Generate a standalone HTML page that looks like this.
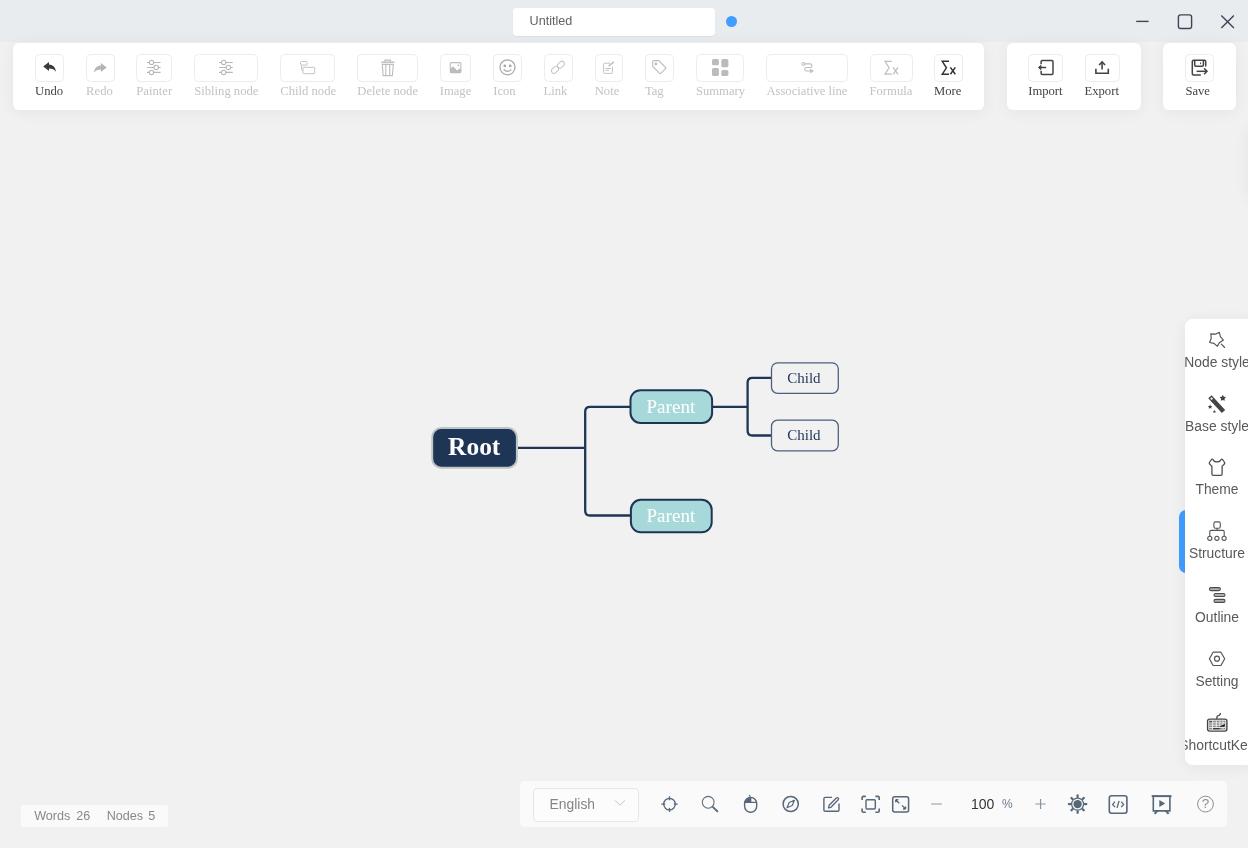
<!DOCTYPE html>
<html><head><meta charset="utf-8">
<style>
*{box-sizing:border-box;margin:0;padding:0}
html,body{width:1248px;height:848px;overflow:hidden;background:#f1f1f1;font-family:"Liberation Sans",sans-serif;position:relative}
.abs{position:absolute}
#root{position:absolute;left:0;top:0;width:1248px;height:848px;will-change:transform}
#titlebar{left:0;top:0;width:1248px;height:42.2px;background:#e9ecef}
#title{left:513px;top:8px;width:202px;height:28px;background:#fff;border-radius:4px;box-shadow:0 1px 1px rgba(0,0,0,.05);font-size:12.6px;color:#606266;line-height:27.4px;padding-left:16.6px}
#dot{left:725.8px;top:15.8px;width:10.8px;height:10.8px;border-radius:50%;background:#409eff}
.tb{background:#fff;border-radius:6px;box-shadow:0 2px 16px 0 rgba(0,0,0,.06);top:43.4px;height:66.2px}
.btn{position:absolute;top:54.2px;height:27.4px;border:1px solid #ececec;border-radius:4.5px;background:#fff}
.lbl{position:absolute;top:83.3px;font-family:"Liberation Serif",serif;font-size:12.65px;color:#c3c3c3;white-space:nowrap;line-height:17px}
.lbl.en{color:#444}
#words{left:21.2px;top:804.7px;width:147px;height:22.5px;background:#fafafa;border-radius:2px}
.wt{position:absolute;top:808.9px;font-size:12.6px;color:#888;line-height:15px;white-space:nowrap}
#nav{left:520px;top:781px;width:707px;height:46px;background:#fafafa;border-radius:5px}
#lang{left:533.1px;top:788.1px;width:105.6px;height:33.6px;border:1px solid #e4e6ec;border-radius:4px;background:#fcfcfc}
#langt{left:549.6px;top:797px;font-size:13.85px;color:#858585;line-height:15px}
#side{left:1185px;top:318.7px;width:70px;height:446.1px;background:#fff;border-radius:7.5px 0 0 7.5px;box-shadow:0 2px 16px 0 rgba(0,0,0,.06);overflow:hidden}
#tab{left:1179px;top:510px;width:6.5px;height:62.5px;background:#409eff;border-radius:9px 0 0 9px}
.sitem{position:absolute;left:-33px;width:130px;text-align:center;font-size:13.85px;color:#595959;white-space:nowrap;line-height:16px}
</style></head><body><div id="root">
<div id="titlebar" class="abs"></div>
<div id="title" class="abs">Untitled</div>
<div id="dot" class="abs"></div>

<div class="abs" style="left:1252px;top:128px;width:200px;height:70px;box-shadow:0 0 18px rgba(0,0,0,.09);background:#fff"></div>

<div class="abs tb" style="left:13px;width:971px"></div>
<div class="abs tb" style="left:1007px;width:133.5px"></div>
<div class="abs tb" style="left:1163.2px;width:72.4px"></div>
<div class="btn" style="left:35.0px;width:29.0px"></div>
<div class="lbl en" style="left:35.00px">Undo</div>
<div class="btn" style="left:86.1px;width:28.5px"></div>
<div class="lbl" style="left:86.10px">Redo</div>
<div class="btn" style="left:136.3px;width:35.9px"></div>
<div class="lbl" style="left:136.30px">Painter</div>
<div class="btn" style="left:194.2px;width:63.9px"></div>
<div class="lbl" style="left:194.20px">Sibling node</div>
<div class="btn" style="left:280.3px;width:54.7px"></div>
<div class="lbl" style="left:280.30px">Child node</div>
<div class="btn" style="left:357.3px;width:60.5px"></div>
<div class="lbl" style="left:357.30px">Delete node</div>
<div class="btn" style="left:439.7px;width:31.6px"></div>
<div class="lbl" style="left:439.70px">Image</div>
<div class="btn" style="left:493.2px;width:28.6px"></div>
<div class="lbl" style="left:493.20px">Icon</div>
<div class="btn" style="left:543.5px;width:29.1px"></div>
<div class="lbl" style="left:543.50px">Link</div>
<div class="btn" style="left:594.7px;width:28.5px"></div>
<div class="lbl" style="left:594.70px">Note</div>
<div class="btn" style="left:644.9px;width:29.1px"></div>
<div class="lbl" style="left:644.90px">Tag</div>
<div class="btn" style="left:695.9px;width:48.6px"></div>
<div class="lbl" style="left:695.90px">Summary</div>
<div class="btn" style="left:766.4px;width:81.5px"></div>
<div class="lbl" style="left:766.40px">Associative line</div>
<div class="btn" style="left:869.5px;width:43.0px"></div>
<div class="lbl" style="left:869.50px">Formula</div>
<div class="btn" style="left:934.0px;width:28.6px"></div>
<div class="lbl en" style="left:934.00px">More</div>
<div class="btn" style="left:1028.2px;width:34.6px"></div>
<div class="lbl en" style="left:1028.20px">Import</div>
<div class="btn" style="left:1084.5px;width:35.1px"></div>
<div class="lbl en" style="left:1084.50px">Export</div>
<div class="btn" style="left:1185.4px;width:28.9px"></div>
<div class="lbl en" style="left:1185.40px">Save</div>

<!-- mind map -->
<svg class="abs" style="left:0;top:0" width="1248" height="848">
 <g fill="none" stroke="#1e3556" stroke-width="2.3">
  <path d="M518 447.8 H585.2"/>
  <path d="M630 406.9 H590 Q585.2 406.9 585.2 411.7 V510.7 Q585.2 515.5 590 515.5 H630"/>
  <path d="M713 406.9 H747.6"/>
  <path d="M771 377.9 H752.4 Q747.6 377.9 747.6 382.7 V430.7 Q747.6 435.5 752.4 435.5 H771"/>
 </g>
 <rect x="432.2" y="428.1" width="84.7" height="39.6" rx="9" fill="#1e3556" stroke="#bcc4c8" stroke-width="2"/>
 <rect x="630.5" y="390.2" width="81.6" height="32.7" rx="10" fill="#a8d9da" stroke="#1e3556" stroke-width="2"/>
 <rect x="630.9" y="499.8" width="80.8" height="32.5" rx="10" fill="#a8d9da" stroke="#1e3556" stroke-width="2"/>
 <rect x="771.5" y="362.9" width="66.8" height="30.4" rx="6" fill="#f1f1f1" stroke="#4b6080" stroke-width="1.3"/>
 <rect x="771.5" y="420.2" width="66.8" height="30.6" rx="6" fill="#f1f1f1" stroke="#4b6080" stroke-width="1.3"/>
 <text x="474.2" y="455" font-family="Liberation Serif" font-weight="bold" font-size="25.4" fill="#fff" text-anchor="middle">Root</text>
 <text x="670.9" y="413" font-family="Liberation Serif" font-size="19.1" fill="#fff" text-anchor="middle">Parent</text>
 <text x="670.9" y="522" font-family="Liberation Serif" font-size="19.1" fill="#fff" text-anchor="middle">Parent</text>
 <text x="803.9" y="383" font-family="Liberation Serif" font-size="15" fill="#22385a" text-anchor="middle">Child</text>
 <text x="803.9" y="440" font-family="Liberation Serif" font-size="15" fill="#22385a" text-anchor="middle">Child</text>
</svg>

<div id="tab" class="abs"></div>
<div id="side" class="abs">
<div class="sitem" style="top:35.1px">Node style</div>
<div class="sitem" style="top:98.9px">Base style</div>
<div class="sitem" style="top:162.7px">Theme</div>
<div class="sitem" style="top:226.5px">Structure</div>
<div class="sitem" style="top:290.3px">Outline</div>
<div class="sitem" style="top:354.1px">Setting</div>
<div class="sitem" style="top:417.9px">ShortcutKey</div>
</div>

<div id="words" class="abs"></div>
<div class="wt" style="left:34.2px">Words</div>
<div class="wt" style="left:76.3px">26</div>
<div class="wt" style="left:106.7px">Nodes</div>
<div class="wt" style="left:148.3px">5</div>
<div id="nav" class="abs"></div>
<div id="lang" class="abs"></div>
<div id="langt" class="abs">English</div>
<div class="abs" style="left:971px;top:796.3px;font-size:14px;color:#333;line-height:16px">100</div>
<div class="abs" style="left:1002px;top:797.3px;font-size:12px;color:#6b7b8b;line-height:14px">%</div>
<div class="abs" style="left:1199px;top:795.8px;width:13px;text-align:center;font-size:13.5px;color:#8c8c8c;line-height:16px">?</div>

<svg class="abs" style="left:0;top:0" width="1248" height="848">
<!-- window controls -->
<g fill="none" stroke="#3b4656" stroke-width="1.4">
 <path d="M1136.2 21.4H1148.6"/>
 <rect x="1178.4" y="14.9" width="13.2" height="13.6" rx="2.2"/>
 <path d="M1221.3 15.4L1233.9 28M1233.9 15.4L1221.3 28"/>
</g>
<!-- toolbar icons -->
<path d="M43.2 66.5 L49 62.0 V64.4 C52.8 64.5 55.6 67.2 56.0 71.8 C54.4 69.5 52.2 68.5 49 68.5 V71.0 Z" fill="#3a3a3a"/>
<path d="M43.2 66.5 L49 62.0 V64.4 C52.8 64.5 55.6 67.2 56.0 71.8 C54.4 69.5 52.2 68.5 49 68.5 V71.0 Z" fill="#b5b5b5" transform="translate(149.9,1) scale(-1,1)"/>
<g fill="#fff" stroke="#b8b8b8" stroke-width="1.1"><path d="M146.9 62.45H160.6M146.9 67.5H160.6M146.9 72.4H160.6"/><circle cx="151.5" cy="62.45" r="2.2"/><circle cx="156.2" cy="67.5" r="2.2"/><circle cx="151.5" cy="72.4" r="2.2"/></g>
<g fill="#fff" stroke="#b8b8b8" stroke-width="1.1"><path d="M219.05 62.45H232.75M219.05 67.5H232.75M219.05 72.4H232.75"/><circle cx="223.65" cy="62.45" r="2.2"/><circle cx="228.35" cy="67.5" r="2.2"/><circle cx="223.65" cy="72.4" r="2.2"/></g>
<g fill="none" stroke="#c4c4c4" stroke-width="1">
 <rect x="300.5" y="61.5" width="6.7" height="3.6" rx="1.1"/>
 <path d="M301.6 65.1V69.8Q301.6 70.6 302.6 70.6"/>
 <rect x="303" y="67.3" width="11.7" height="6.4" rx="0.6"/>
</g>
<g fill="none" stroke="#bdbdbd" stroke-width="1.1">
 <path d="M381.1 62.2H394.5" stroke-width="1.4"/>
 <path d="M384.9 62V60.1H390.4V62"/>
 <path d="M382.3 64.4L383.1 75.6H392.4L393.3 64.4Z"/>
 <path d="M385.8 64.6V75.4M389.7 64.6V75.4"/>
</g>
<g fill="#bcbcbc">
 <rect x="450.3" y="62.6" width="10.6" height="10" rx="1" fill="none" stroke="#bcbcbc" stroke-width="1.1"/>
 <path d="M450.2 72.7V68.6L453.3 66.4L457.2 70.4L459.3 68.6L461.1 69.6V72.7Z"/>
 <circle cx="458.4" cy="65.3" r="0.9"/>
</g>
<g fill="none" stroke="#a9a9a9" stroke-width="1.3">
 <circle cx="507.5" cy="67.3" r="7.5"/>
 <path d="M503.7 69.4Q507.5 73.4 511.3 69.4"/>
 <circle cx="504.8" cy="65.9" r="0.75" fill="#a9a9a9"/><circle cx="510.2" cy="65.9" r="0.75" fill="#a9a9a9"/>
</g>
<g fill="none" stroke="#c6c6c6" stroke-width="1">
 <rect x="551.1" y="67.4" width="7.8" height="5" rx="2.5" transform="rotate(-42 555 69.9)"/>
 <rect x="557" y="62.2" width="7.8" height="5" rx="2.5" transform="rotate(-42 560.9 64.7)"/>
</g>
<g fill="none" stroke="#c2c2c2" stroke-width="1">
 <path d="M610 63.2H604.6Q603.6 63.2 603.6 64.2V72.4Q603.6 73.4 604.6 73.4H611.4Q612.4 73.4 612.4 72.4V66.8"/>
 <path d="M605.3 68.5H610.9M605.5 70.4H608.9"/>
 <path d="M608.6 66.2L613.8 61.9" stroke-width="1.5"/>
</g>
<g fill="none" stroke="#bdbdbd" stroke-width="1.1">
 <path d="M652.7 61.6Q652.7 60.6 653.7 60.6H658.7L665.6 67.5Q666.2 68.1 665.6 68.7L660.9 73.4Q660.3 74 659.7 73.4L652.7 66.4Z"/>
 <circle cx="655.9" cy="64" r="0.9" fill="#bdbdbd"/>
</g>
<g fill="#bbbbbb">
 <rect x="712" y="59.1" width="6.9" height="6.2" rx="1.6"/>
 <rect x="721.3" y="59.1" width="7.1" height="8.2" rx="1.6"/>
 <rect x="712" y="67.9" width="6.9" height="8.2" rx="1.6"/>
 <rect x="721.3" y="69.9" width="7.1" height="6.2" rx="1.6"/>
</g>
<g fill="none" stroke="#bdbdbd" stroke-width="1.1">
 <circle cx="803.3" cy="63.9" r="1.4"/>
 <path d="M804.8 63.9H810Q811.9 63.9 811.9 65.7Q811.9 67.5 810 67.5H806.5Q804.7 67.5 804.7 69.25Q804.7 71 806.5 71H811"/>
 <path d="M810.8 69.6L812.9 71L810.8 72.4Z" fill="#bdbdbd"/>
</g>
<g fill="none" stroke="#bdbdbd" stroke-width="1.2"><path d="M891.7 61.3H885.0L889.1 67.8L885.0 74.2H891.7"/><path d="M893.1 67.4L898.0 74.3M898.0 67.4L893.1 74.3"/></g>
<g fill="none" stroke="#333" stroke-width="1.5"><path d="M949.0 61.3H942.3L946.4 67.8L942.3 74.2H949.0"/><path d="M950.4 67.4L955.3 74.3M955.3 67.4L950.4 74.3"/></g>
<g fill="none" stroke="#444" stroke-width="1.5">
 <path d="M1041.1 64.3V61.6Q1041.1 60.4 1042.3 60.4H1051.8Q1053 60.4 1053 61.6V73.3Q1053 74.5 1051.8 74.5H1042.3Q1041.1 74.5 1041.1 73.3V70.7"/>
 <path d="M1039.4 67.5H1046.2"/>
 <path d="M1040.9 65.4L1038.4 67.5L1040.9 69.6Z" fill="#444" stroke-width="1"/>
</g>
<g fill="none" stroke="#444" stroke-width="1.6">
 <path d="M1095.9 68.8V73.3H1108.3V68.8"/>
 <path d="M1102.1 69.4V62.3"/>
 <path d="M1099.1 65L1102.1 61.9L1105.1 65"/>
</g>
<g fill="none" stroke="#444" stroke-width="1.5">
 <path d="M1200.8 75H1193.5Q1192.3 75 1192.3 73.8V61.5Q1192.3 60.3 1193.5 60.3H1204.5Q1205.7 60.3 1205.7 61.5V66.5"/>
 <path d="M1194.7 60.3V65Q1194.7 66.2 1195.9 66.2H1202.2Q1203.4 66.2 1203.4 65V60.3"/>
 <path d="M1200.6 62.4V64.2" stroke-width="1"/>
 <path d="M1196.6 71.3H1206.6"/>
 <path d="M1204.1 68.4L1207 71.3L1204.1 74.2"/>
</g>
<!-- sidebar icons -->
<g fill="none" stroke="#555" stroke-width="1.15" stroke-linejoin="round">
 <polygon points="1210.78,333.86 1215.25,334.17 1219.34,332.35 1220.43,336.70 1223.43,340.03 1219.62,342.40 1217.38,346.29 1213.95,343.40 1209.57,342.47 1211.25,338.32"/>
 <path d="M1221.4 344.1L1224.6 347.5" stroke-linecap="round"/>
</g>
<g fill="#444">
 <path d="M1209.9 396.8L1223.5 411.6" stroke="#444" stroke-width="4.5"/>
 <rect x="1210.6" y="397.6" width="2" height="2" fill="#fff" transform="rotate(47 1211.6 398.6)"/>
 <polygon points="1222.80,394.70 1223.86,396.64 1226.03,397.05 1224.51,398.66 1224.80,400.85 1222.80,399.90 1220.80,400.85 1221.09,398.66 1219.57,397.05 1221.74,396.64"/>
 <polygon points="1210.10,404.60 1210.81,405.93 1212.29,406.19 1211.24,407.27 1211.45,408.76 1210.10,408.10 1208.75,408.76 1208.96,407.27 1207.91,406.19 1209.39,405.93"/>
 <polygon points="1214.40,410.00 1214.90,410.91 1215.92,411.11 1215.21,411.86 1215.34,412.89 1214.40,412.45 1213.46,412.89 1213.59,411.86 1212.88,411.11 1213.90,410.91"/>
</g>
<g fill="none" stroke="#505050" stroke-width="1.3" stroke-linejoin="round">
 <path d="M1212.9 459.4Q1214 461.9 1217 461.9Q1220 461.9 1221.1 459.4Q1221.9 458.8 1222.6 459.5L1224.6 462.5Q1225.1 463.6 1224 464.4L1222.1 466.3V474Q1222.1 475.3 1220.8 475.3H1213.2Q1211.9 475.3 1211.9 474V466.3L1210 464.4Q1208.9 463.6 1209.4 462.5L1211.4 459.5Q1212.1 458.8 1212.9 459.4Z"/>
</g>
<g fill="none" stroke="#555" stroke-width="1.1">
 <rect x="1213.9" y="521.9" width="6.4" height="6.4" rx="1.5"/>
 <path d="M1217.1 528.3V530.4M1209.8 536.1V531.8Q1209.8 530.4 1211.2 530.4H1222.8Q1224.2 530.4 1224.2 531.8V536.1"/>
 <circle cx="1209.8" cy="538.3" r="2.1"/><circle cx="1216.9" cy="538.3" r="2.1"/><circle cx="1224.1" cy="538.3" r="2.1"/>
</g>
<g fill="#b0b0b0" stroke="#4d4d4d" stroke-width="1.1">
 <rect x="1209.4" y="587.6" width="11" height="3" rx="1.5"/>
 <rect x="1214" y="593.5" width="11" height="3" rx="1.5"/>
 <rect x="1214" y="599.4" width="11" height="3" rx="1.5"/>
</g>
<g fill="none" stroke="#555" stroke-width="1.2" stroke-linejoin="round">
 <path d="M1209.4 658.8L1213.1 652.2H1220.9L1224.7 658.8L1220.9 665.5H1213.1Z"/>
 <circle cx="1217" cy="658.7" r="2.5"/>
</g>
<g fill="none" stroke="#444" stroke-width="1.4">
 <rect x="1207.6" y="719.1" width="19.3" height="12" rx="2"/>
 <path d="M1216.9 719V717.2Q1216.9 716 1218.3 715.7Q1220.8 715.1 1220.2 713" stroke-width="1.3"/>
</g>
<g>
 <rect x="1209" y="720.6" width="16.4" height="9" fill="#8a8a8a"/>
 <path d="M1209 722.9H1225.4M1209 725.2H1225.4M1209 727.5H1225.4M1212.6 720.6V729.6M1216.3 720.6V727.5M1219.9 720.6V727.5M1223 720.6V729.6" stroke="#fff" stroke-width="0.75"/>
 <path d="M1209.6 721.7H1212M1219.8 726.4H1223.6Q1224.6 726.4 1224.6 724.2M1213 728.6H1219.6" stroke="#3a3a3a" stroke-width="1.1"/>
</g>
<!-- bottom nav icons -->
<g fill="none" stroke="#56677a" stroke-width="1.3">
 <circle cx="669.5" cy="804.1" r="5.8"/>
 <path d="M669.5 796.3V800.2M669.5 808V811.9M661.3 804.1H665.2M673.8 804.1H677.7"/>
</g>
<g fill="none" stroke="#5f6f80" stroke-width="1.05">
 <circle cx="708.2" cy="802.3" r="5.9"/>
 <path d="M712.7 806.9L717.3 811.3" stroke-width="2" stroke-linecap="round"/>
</g>
<g fill="none" stroke="#56677a" stroke-width="1.4">
 <rect x="744.6" y="797.4" width="12.1" height="14.8" rx="6"/>
 <path d="M744.6 802.4H756.7M750.65 797.4V802.4"/>
 <path d="M750.2 797.4Q750.2 795.6 749 794.9" stroke-width="1.1"/>
</g>
<path d="M744.6 802.4V803.2Q744.6 797.4 750.65 797.4V802.4Z" fill="#56677a"/>
<g fill="none" stroke="#56677a" stroke-width="1.5">
 <circle cx="790.7" cy="804" r="7.6"/>
 <path d="M794.4 800.3L792.2 805.5L787 807.7L789.2 802.5Z" stroke-width="1.2" stroke-linejoin="round"/>
</g>
<g fill="none" stroke="#56677a" stroke-width="1.4">
 <path d="M832 797.4H825.2Q823.9 797.4 823.9 798.7V809.9Q823.9 811.2 825.2 811.2H837.7Q839 811.2 839 809.9V803.6"/>
 <path d="M828.5 807.9L829.1 805.3L836.4 798Q837.3 797.1 838.2 798Q839.1 798.9 838.2 799.8L830.9 807.3Z" stroke-width="1.3" stroke-linejoin="round"/>
</g>
<g fill="none" stroke="#56677a" stroke-width="1.6">
 <path d="M862.1 800.1V797.7Q862.1 796.4 863.4 796.4H865.8M875.4 796.4H877.9Q879.2 796.4 879.2 797.7V800.1M879.2 808.6V811Q879.2 812.3 877.9 812.3H875.4M865.8 812.3H863.4Q862.1 812.3 862.1 811V808.6"/>
 <rect x="866" y="799.7" width="9.3" height="9.3" rx="1" stroke-width="1.4"/>
</g>
<g fill="none" stroke="#56677a" stroke-width="1.5">
 <rect x="892.7" y="796.7" width="15.9" height="15.3" rx="2"/>
 <path d="M895.7 799.7L899.3 803.3M895.7 799.7V802.3M895.7 799.7H898.3M905.6 809L902 805.4M905.6 809V806.4M905.6 809H903" stroke-width="1.3"/>
</g>
<path d="M931.2 804H941.9M1035.5 804H1045.6M1040.55 799V809" stroke="#8595a5" stroke-width="1.2"/>
<g fill="#56677a" stroke="#56677a">
 <circle cx="1077.6" cy="804.1" r="4.2" stroke="none"/>
 <circle cx="1077.6" cy="804.1" r="6" fill="none" stroke-width="1.2"/>
 <path d="M1084.80 804.10L1086.30 804.10M1082.69 809.19L1083.75 810.25M1077.60 811.30L1077.60 812.80M1072.51 809.19L1071.45 810.25M1070.40 804.10L1068.90 804.10M1072.51 799.01L1071.45 797.95M1077.60 796.90L1077.60 795.40M1082.69 799.01L1083.75 797.95" stroke-width="2.3" stroke-linecap="round"/>
</g>
<g fill="none" stroke="#56677a" stroke-width="1.6">
 <rect x="1109.3" y="795.7" width="17.6" height="17.5" rx="2.2"/>
 <path d="M1115 801.6L1112.6 804.4L1115 807.2M1121.2 801.6L1123.6 804.4L1121.2 807.2M1119.1 800.9L1117 808" stroke-width="1.3"/>
</g>
<g fill="none" stroke="#56677a" stroke-width="1.6">
 <path d="M1151.7 796.1H1171.5" stroke-width="2"/>
 <path d="M1153.3 796.1V810.9H1169.9V796.1"/>
 <path d="M1157.4 810.9L1154.6 813.9M1165.8 810.9L1168.6 813.9" stroke-width="2.1"/>
</g>
<path d="M1159.3 799.9L1165.2 803.5L1159.3 807.1Z" fill="#56677a"/>
<circle cx="1205.5" cy="804.1" r="7.9" fill="none" stroke="#8c8c8c" stroke-width="1"/>
</svg>

<svg class="abs" style="left:0;top:0" width="1248" height="848"><path d="M615 800.4L619.8 805.2L624.9 800.4" fill="none" stroke="#c0c4cc" stroke-width="1"/></svg>
</div></body></html>
